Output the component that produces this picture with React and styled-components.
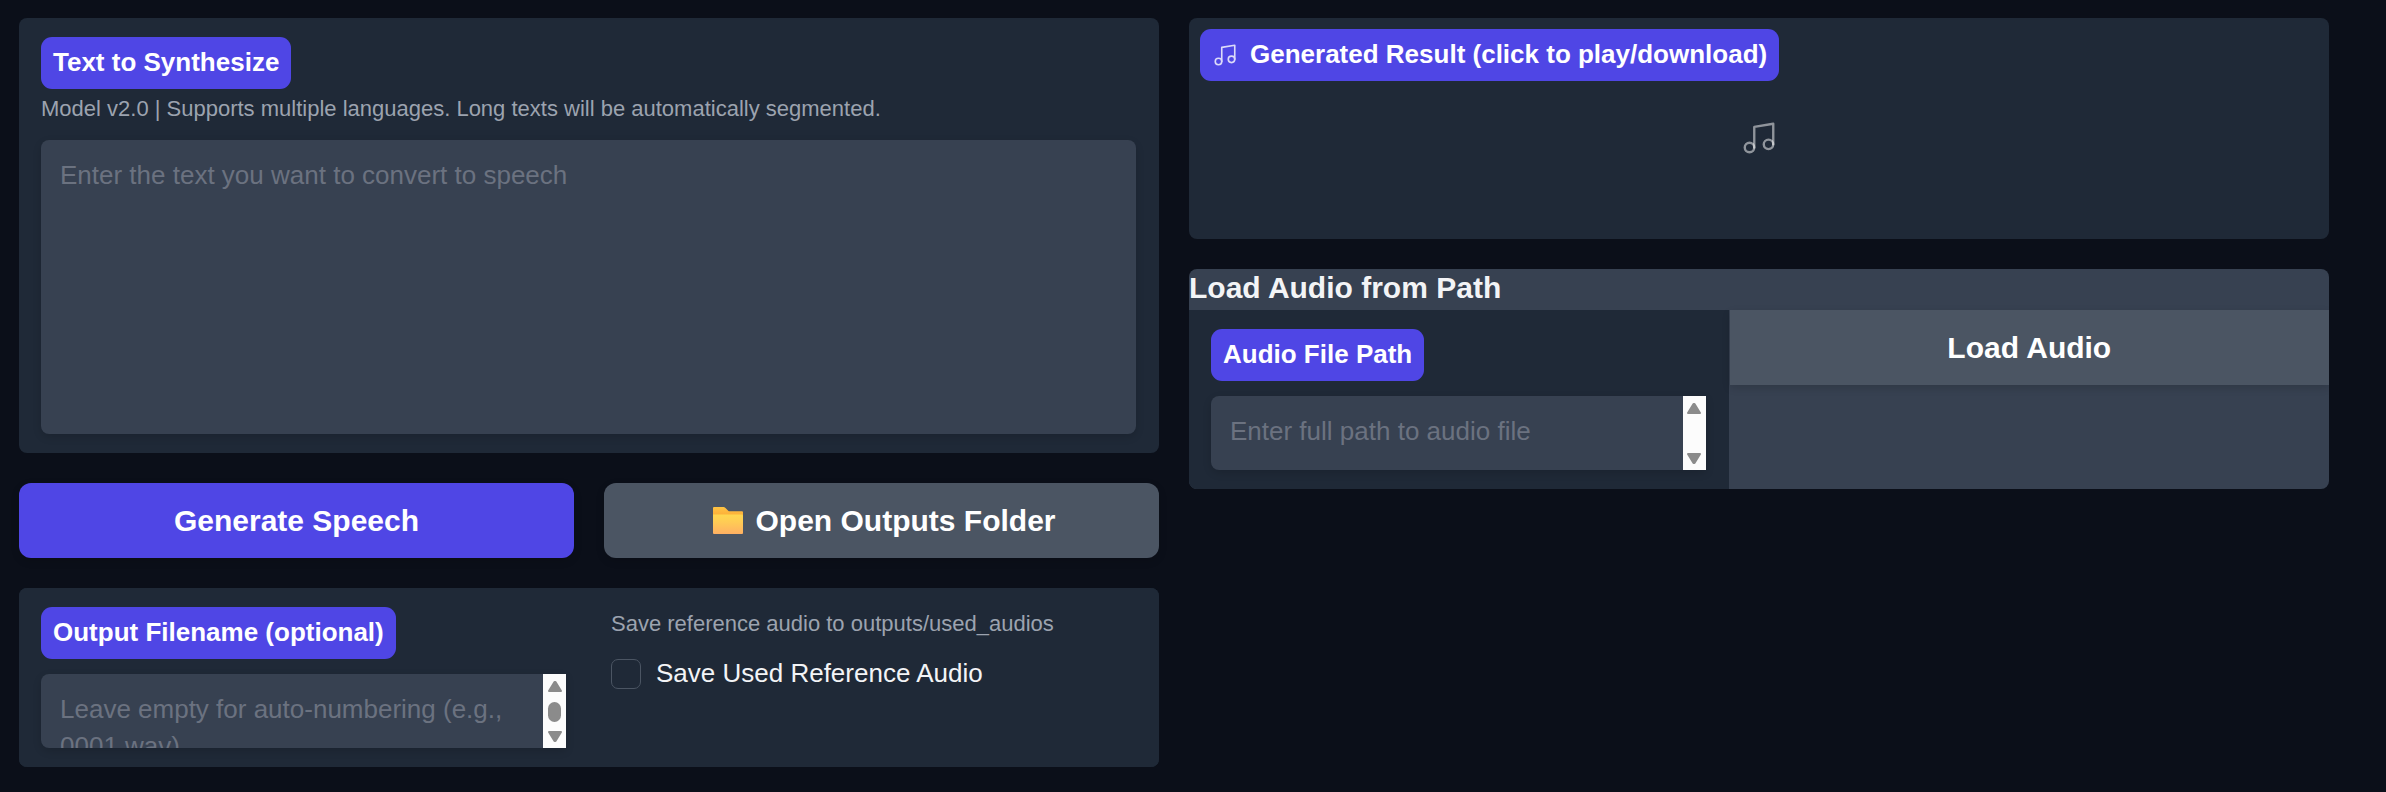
import { useState } from "react";
import styled, { createGlobalStyle, css } from "styled-components";
import { Music } from "lucide-react";

//Style Components :

const GlobalStyle = createGlobalStyle`
  :root {
    --color-page: #0b0f19;
    --color-block: #1f2937;
    --color-input: #374151;
    --color-secondary: #4b5563;
    --color-primary: #4f46e5;
    --color-text: #f3f4f6;
    --color-muted: #9ca3af;
    --color-placeholder: #6b7280;
    --shadow-drop: 0 3px 8px rgba(0, 0, 0, 0.14);
  }

  *,
  *::before,
  *::after {
    box-sizing: border-box;
    margin: 0;
  }

  html {
    background-color: var(--color-page);
  }

  body,
  button,
  input,
  textarea {
    font-family: "Liberation Sans", Arial, sans-serif;
    font-size: 26px;
    line-height: 37px;
    color: var(--color-text);
  }
`;

const Page = styled.main`
  display: grid;
  grid-template-columns: repeat(2, minmax(0, 1fr));
  gap: 30px;
  align-items: start;
  padding: 18px 57px 18px 19px;
`;

const Column = styled.section`
  display: flex;
  flex-direction: column;
  gap: 30px;
`;

const Panel = styled.div`
  border-radius: 8px;
  background-color: var(--color-block);
  overflow: hidden;
`;

const Block = styled.div`
  display: flex;
  flex-direction: column;
  align-items: flex-start;
  padding: 19px 23px 19px 22px;
  background-color: var(--color-block);
`;

const SplitPanel = styled(Panel)`
  display: grid;
  grid-template-columns: repeat(2, minmax(0, 1fr));
`;

const badge = css`
  display: inline-flex;
  align-items: center;
  gap: 12px;
  padding: 7px 12px 8px;
  border-radius: 11px;
  background-color: var(--color-primary);
  color: #fff;
  font-weight: 700;
`;

const FieldLabel = styled.label`
  ${badge}
`;

const ResultLabel = styled.h2`
  ${badge}
  font-size: 26px;

  & svg {
    opacity: 0.8;
  }
`;

const Info = styled.p`
  font-size: 22px;
  line-height: 33px;
  color: var(--color-muted);
  margin-top: ${(props) => (props.$spaced ? "3px" : "0")};
`;

const Field = styled.div`
  display: flex;
  width: 100%;
  height: ${(props) => (props.$tall ? "294px" : "74px")};
  margin-top: 15px;
  border-radius: ${(props) => (props.$tall ? "8px" : "8px 0 0 8px")};
  background-color: var(--color-input);
  box-shadow: var(--shadow-drop);
`;

const TextArea = styled.textarea`
  flex: 1;
  min-width: 0;
  padding: 17px 19px;
  border: none;
  outline: none;
  resize: none;
  overflow: hidden;
  background: transparent;

  &::placeholder {
    color: var(--color-placeholder);
    opacity: 1;
  }
`;

const Track = styled.div`
  display: flex;
  flex-direction: column;
  align-items: center;
  justify-content: space-between;
  width: 23px;
  padding: 6px 0 5px;
  background-color: #fcfcfc;
`;

const Thumb = styled.div`
  width: 13px;
  height: 20px;
  border-radius: 7px;
  background-color: #8b8b8b;
`;

const ButtonRow = styled.div`
  display: grid;
  grid-template-columns: repeat(2, minmax(0, 1fr));
  gap: 30px;
`;

const Button = styled.button`
  display: flex;
  align-items: center;
  justify-content: center;
  gap: 8px;
  padding: 19px;
  border: none;
  border-radius: ${(props) => (props.$flat ? "0" : "12px")};
  background-color: ${(props) =>
    props.$variation === "primary"
      ? "var(--color-primary)"
      : "var(--color-secondary)"};
  box-shadow: var(--shadow-drop);
  color: #fff;
  font-size: 30px;
  font-weight: 700;
  cursor: pointer;
`;

const CheckLabel = styled.label`
  display: flex;
  align-items: center;
  gap: 15px;
  margin-top: 15px;
`;

const Checkbox = styled.input`
  appearance: none;
  width: 30px;
  height: 30px;
  border: 1px solid var(--color-secondary);
  border-radius: 7px;
  background-color: var(--color-block);

  &:checked {
    background-color: var(--color-primary);
  }
`;

const ResultPanel = styled(Panel)`
  padding: 11px 11px 44px;
`;

const EmptyResult = styled.div`
  display: flex;
  align-items: center;
  justify-content: center;
  height: 114px;
  color: rgba(255, 255, 255, 0.5);
`;

const LoadPanel = styled(Panel)`
  background-color: var(--color-input);
`;

const LoadTitle = styled.h2`
  padding-bottom: 4px;
  font-size: 30px;
`;

const LoadRow = styled.div`
  display: grid;
  grid-template-columns: 9fr 10fr;
  column-gap: 1px;
  align-items: start;
`;

//Components :

function FolderIcon() {
  return (
    <svg width="40" height="28" viewBox="-5 0 40 28" aria-hidden="true">
      <defs>
        <linearGradient id="folderBack" x1="0" y1="0" x2="0" y2="1">
          <stop offset="0" stopColor="#ffc443" />
          <stop offset="0.6" stopColor="#fdb13a" />
        </linearGradient>
        <linearGradient id="folderFront" x1="0" y1="0" x2="0" y2="1">
          <stop offset="0" stopColor="#ffd84f" />
          <stop offset="0.4" stopColor="#ffcb55" />
          <stop offset="1" stopColor="#ffb063" />
        </linearGradient>
      </defs>
      <path
        d="M1 0h9.5q1 0 1.7.7l3 3q.6.5 1.4.5H29q1 0 1 1V12H0V1q0-1 1-1Z"
        fill="url(#folderBack)"
      />
      <path
        d="M0 7.5h29q1 0 1 1V26q0 1-1 1H1q-1 0-1-1Z"
        fill="url(#folderFront)"
      />
    </svg>
  );
}

function Arrow({ down }) {
  return (
    <svg width="16" height="13" viewBox="0 0 16 13" aria-hidden="true">
      <path
        d={down ? "M2 2h12L8.5 11h-1Z" : "M2 11h12L8.5 2h-1Z"}
        fill="#8b8b8b"
        stroke="#8b8b8b"
        strokeWidth="2"
        strokeLinejoin="round"
      />
    </svg>
  );
}

function Scrollbar({ thumb }) {
  return (
    <Track aria-hidden="true">
      <Arrow />
      {thumb && <Thumb />}
      <Arrow down />
    </Track>
  );
}

function App() {
  const [text, setText] = useState("");
  const [filename, setFilename] = useState("");
  const [path, setPath] = useState("");
  const [saveAudio, setSaveAudio] = useState(false);

  return (
    <>
      <GlobalStyle />
      <Page>
        <Column>
          <Panel>
            <Block>
              <FieldLabel htmlFor="text">Text to Synthesize</FieldLabel>
              <Info $spaced>
                Model v2.0 | Supports multiple languages. Long texts will be
                automatically segmented.
              </Info>
              <Field $tall>
                <TextArea
                  id="text"
                  placeholder="Enter the text you want to convert to speech"
                  value={text}
                  onChange={(e) => setText(e.target.value)}
                />
              </Field>
            </Block>
          </Panel>

          <ButtonRow>
            <Button $variation="primary">Generate Speech</Button>
            <Button>
              <FolderIcon />
              Open Outputs Folder
            </Button>
          </ButtonRow>

          <SplitPanel>
            <Block>
              <FieldLabel htmlFor="filename">
                Output Filename (optional)
              </FieldLabel>
              <Field>
                <TextArea
                  id="filename"
                  rows={1}
                  placeholder="Leave empty for auto-numbering (e.g., 0001.wav)"
                  value={filename}
                  onChange={(e) => setFilename(e.target.value)}
                />
                <Scrollbar thumb />
              </Field>
            </Block>
            <Block>
              <Info>Save reference audio to outputs/used_audios</Info>
              <CheckLabel>
                <Checkbox
                  type="checkbox"
                  checked={saveAudio}
                  onChange={(e) => setSaveAudio(e.target.checked)}
                />
                Save Used Reference Audio
              </CheckLabel>
            </Block>
          </SplitPanel>
        </Column>

        <Column>
          <ResultPanel>
            <ResultLabel>
              <Music size={26} strokeWidth={1.5} />
              Generated Result (click to play/download)
            </ResultLabel>
            <EmptyResult>
              <Music size={38} strokeWidth={1.5} />
            </EmptyResult>
          </ResultPanel>

          <LoadPanel>
            <LoadTitle>Load Audio from Path</LoadTitle>
            <LoadRow>
              <Block>
                <FieldLabel htmlFor="path">Audio File Path</FieldLabel>
                <Field>
                  <TextArea
                    id="path"
                    rows={1}
                    placeholder="Enter full path to audio file"
                    value={path}
                    onChange={(e) => setPath(e.target.value)}
                  />
                  <Scrollbar />
                </Field>
              </Block>
              <Button $flat>Load Audio</Button>
            </LoadRow>
          </LoadPanel>
        </Column>
      </Page>
    </>
  );
}

export default App;
